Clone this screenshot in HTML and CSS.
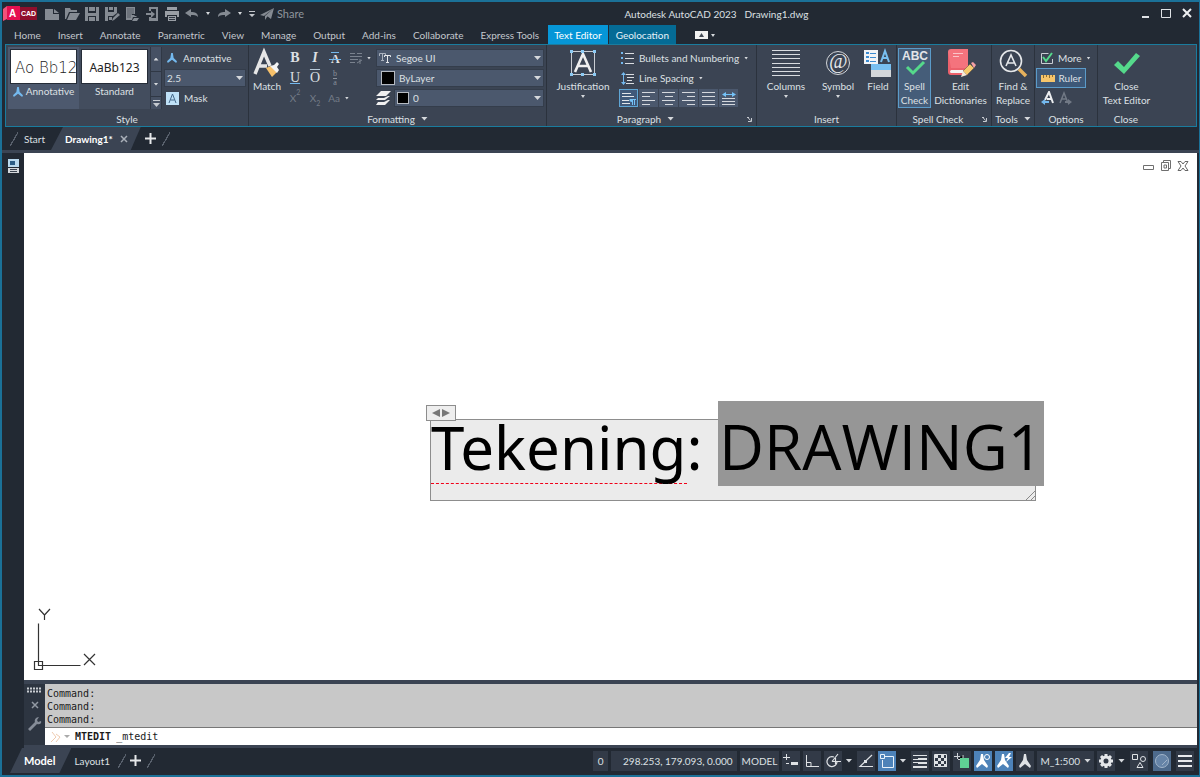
FILE: index.html
```html
<!DOCTYPE html>
<html lang="en">
<head>
<meta charset="utf-8">
<title>Autodesk AutoCAD 2023 - Drawing1.dwg</title>
<link rel="stylesheet" href="styles.css">
</head>
<body>
<header class="titlebar">
  <div class="quick">
    <button class="logo" aria-label="Application menu"><svg width="34" height="15" viewBox="0 0 34 15"><path fill="#8f0f2c" d="M4 1h30v13H4z"/><path fill="#f0527a" d="M0 3l4-3v13l-4 2z"/><path fill="#e51050" d="M4 0h13v14H4z"/><text class="logo-a" x="6" y="11">A</text><text class="logo-cad" x="18" y="10">CAD</text></svg></button>
    <button aria-label="New"><svg width="16" height="14" viewBox="0 0 16 14"><path fill="#858b93" d="M1 2h8v5h6v6H1zM10 2l5 4h-5z"/></svg></button>
    <button aria-label="Open"><svg width="16" height="14" viewBox="0 0 16 14"><path fill="#858b93" d="M1 1h5l1 2h6v2H5l-3 7H1zM6 6h10l-4 7H3z"/></svg></button>
    <button aria-label="Save"><svg width="16" height="14" viewBox="0 0 16 14"><path fill="#858b93" d="M1 0h3v6h8V0h3v14h-3V9H4v5H1zM5 0h6v4H5zM5 10h6v4H5z"/></svg></button>
    <button aria-label="Save As"><svg width="16" height="14" viewBox="0 0 16 14"><path fill="#858b93" d="M1 0h3v5h6V0h3v6l-4 3H4v5H1zM5 0h4v3H5zM5 10h3v3H5zM14 6l2 2-6 5-2 1 1-3z"/></svg></button>
    <button aria-label="Open from mobile"><svg width="16" height="14" viewBox="0 0 16 14"><path fill="#6d737c" d="M2 0h9v7H8v5H2z"/><path fill="#858b93" d="M2 0h9v7h-1V1H3v10h4v2H2zM7 8h3l1 1h2l-1 1H9l-1 3H7zM10 11h5l-2 3H8z"/></svg></button>
    <button aria-label="Save to mobile"><svg width="16" height="14" viewBox="0 0 16 14"><path fill="#858b93" d="M5 0h9v14H5v-4h2v1h5V2H7v2H5zM2 6h5V4l4 3-4 4V8H2z"/></svg></button>
    <button aria-label="Plot"><svg width="16" height="14" viewBox="0 0 16 14"><path fill="#9a9fa6" d="M3 0h10v3H3zM1 4h14v6h-2V8H3v2H1zM4 9h8v5H4z"/><path stroke="#303743" d="M5 10.500h6M5 12.500h6"/></svg></button>
    <button aria-label="Undo"><svg width="16" height="14" viewBox="0 0 16 14"><path fill="#858b93" d="M1 6l6-4v3c4 0 7 1 7 5-2-2-4-2-7-2v2z"/></svg></button>
    <i class="caret tiny"></i>
    <button aria-label="Redo"><svg width="16" height="14" viewBox="0 0 16 14"><path fill="#858b93" d="M15 6L9 2v3c-4 0-7 1-7 5 2-2 4-2 7-2v2z"/></svg></button>
    <i class="caret tiny"></i>
    <button aria-label="Customize"><svg width="8" height="14" viewBox="0 0 8 14"><path fill="#c2c6cb" d="M1 4h6v1H1zM1 7h6L4 10z"/></svg></button>
    <button class="share"><svg width="14" height="14" viewBox="0 0 14 14"><path fill="#858b93" d="M14 1L0 8l4 1zM14 1L5 9v4l2-3zM14 1L7 9l4 3z"/></svg>Share</button>
  </div>
  <div class="caption"><span>Autodesk AutoCAD 2023</span><span>Drawing1.dwg</span></div>
  <div class="winbtns">
    <button aria-label="Minimize"><svg width="12" height="12"><path fill="#dfe2e6" d="M3 8h7v2H3z"/></svg></button>
    <button aria-label="Maximize"><svg width="12" height="12"><path fill="none" stroke="#dfe2e6" d="M1.500 1.500h9v8h-9z"/><path fill="#dfe2e6" d="M1 1h10v1H1z"/></svg></button>
    <button aria-label="Close"><svg width="12" height="12"><path stroke="#eef0f2" stroke-width="2" d="M2 1l8 8M10 1l-8 8"/></svg></button>
  </div>
</header>

<nav class="tabs">
  <button>Home</button><button>Insert</button><button>Annotate</button><button>Parametric</button><button>View</button><button>Manage</button><button>Output</button><button>Add-ins</button><button>Collaborate</button><button>Express Tools</button>
  <button class="tab-on">Text Editor</button><button class="tab-geo">Geolocation</button>
  <button class="tab-min" aria-label="Minimize ribbon"><svg width="20" height="8" viewBox="0 0 20 8"><path fill="#f2f2f2" d="M0 0h13v8H0z"/><path fill="#444b56" d="M4 6l2.500-4L9 6z"/><path fill="#d5d8dc" d="M16 3h4l-2 3z"/></svg></button>
</nav>

<main class="ribbon">
  <section class="panel p-style">
    <div class="tools">
      <div class="gallery">
        <button class="sample sample-on"><span class="thumb thumb-thin">Ao Bb12</span><span class="cap"><svg width="10" height="10" viewBox="0 0 12 12"><path fill="#74b9ee" d="M5 0h2l1 6 4 4-1 2-5-4-5 4-1-2 4-4z"/></svg>Annotative</span></button>
        <button class="sample"><span class="thumb">AaBb123</span><span class="cap">Standard</span></button>
        <div class="scroller"><button aria-label="Up"><i class="caret up"></i></button><button aria-label="Down"><i class="caret"></i></button><button aria-label="Expand"><svg width="7" height="7"><path fill="#c6cad0" d="M0 0h7v1H0zM0 3h7L3.500 7z"/></svg></button></div>
      </div>
      <div class="rows style-rows">
        <button class="row"><svg width="12" height="10" viewBox="0 0 12 12"><path fill="#74b9ee" d="M5 0h2l1 6 4 4-1 2-5-4-5 4-1-2 4-4z"/></svg>Annotative</button>
        <label class="combo"><select aria-label="Text height"><option>2.5</option></select><i class="caret"></i></label>
        <button class="row"><svg width="13" height="13"><path fill="#bfe1f7" d="M0 0h13v13H0z"/><path fill="none" stroke="#44688a" d="M3 11l3.500-9L10 11M4.500 8h4"/></svg>Mask</button>
      </div>
    </div>
    <h2>Style</h2>
  </section>

  <section class="panel p-format">
    <div class="tools">
      <button class="big match"><svg width="28" height="28" viewBox="0 0 28 28"><path fill="none" stroke="#e6e6e6" stroke-width="3.400" d="M2 25L11 3l6 14M5 17h9"/><path fill="#f6c06a" d="M13 19l5-2 6 6-5 5z"/><path fill="#f3f3f3" d="M17 17l4-1 3-3 2 2-2 3 2 3-2 3z"/></svg>Match</button>
      <div class="glyphs">
        <button class="serif"><b>B</b></button><button class="serif"><b><em>I</em></b></button><button class="serif" aria-label="Strikethrough"><svg width="16" height="18"><text class="strike-a" x="4" y="14">A</text><path stroke="#74b9ee" d="M4 3.500h8M2 10.500h12"/></svg></button><button class="with-caret" aria-label="Stack options"><svg width="14" height="14"><path stroke="#7a828e" d="M1 2.500h5M8 2.500h5M1 5.500h12M1 8.500h8M1 11.500h5M11 8v5M8 12l5-3"/></svg><i class="caret tiny"></i></button>
        <button class="serif under">U</button><button class="serif over">O</button><button class="frac" aria-label="Stack"><span>b</span><span>a</span></button><span></span>
        <button class="dim">X<sup>2</sup></button><button class="dim">X<sub>2</sub></button><button class="dim case">Aa<i class="caret tiny"></i></button>
      </div>
      <div class="rows combos">
        <label class="combo"><svg width="13" height="12"><path fill="none" stroke="#aab2be" d="M.5 4V1.500h6V4M3.500 2v6M2 8.500h3"/><path fill="none" stroke="#e6e8eb" d="M5.500 5V3.500h6V5M8.500 4v6M7 10.500h3"/></svg><select aria-label="Font"><option>Segoe UI</option></select><i class="caret"></i></label>
        <label class="combo combo-wide"><i class="swatch"></i><select aria-label="Color"><option>ByLayer</option></select><i class="caret"></i></label>
        <div class="layer"><svg width="15" height="14"><path fill="#f0f0f0" d="M5 0h10l-5 5H0zM12 5h2l-5 4H0l2-2h6zM12 9h2l-5 5H0l2-3h6z"/></svg><label class="combo"><i class="swatch swatch-small"></i><select aria-label="Layer"><option>0</option></select><i class="caret"></i></label></div>
      </div>
    </div>
    <h2>Formatting <i class="caret"></i></h2>
  </section>

  <section class="panel p-para">
    <div class="tools">
      <button class="big just"><svg width="28" height="28" viewBox="0 0 28 28"><path fill="none" stroke="#c9cdd3" d="M2.500 2.500h23v23h-23z"/><path fill="none" stroke="#efefef" stroke-width="2.600" d="M6 23L14 5l8 18M9 17h10"/><path fill="#8ccbf5" d="M1 1h3v3H1zM12 1h3v3h-3zM24 1h3v3h-3zM1 24h3v3H1zM12 24h3v3h-3zM24 24h3v3h-3z"/></svg>Justification<i class="caret tiny"></i></button>
      <div class="rows">
        <button class="row"><svg width="13" height="12"><path fill="#74b9ee" d="M0 0h2v2H0zM0 5h2v2H0zM0 10h2v2H0z"/><path stroke="#dadde1" d="M4 1.500h9M4 6.500h9M4 11.500h9"/></svg>Bullets and Numbering<i class="caret tiny"></i></button>
        <button class="row"><svg width="13" height="13"><path fill="#74b9ee" d="M2 2h1v9H2zM2.500 0L5 3H0zM0 10h5l-2.500 3z"/><path stroke="#dadde1" d="M5 2.500h8M6 5.500h7M6 8.500h5M5 11.500h8"/></svg>Line Spacing<i class="caret tiny"></i></button>
        <div class="aligns">
          <button class="align-on" aria-label="Default"><svg width="14" height="13"><path stroke="#e1e4e8" d="M0 1.500h9M0 4.500h12M0 8.500h7M0 11.500h8"/><path fill="#74c2f7" d="M8 7h6v1h-1v5h-1V8h-1v5h-1v-3c-3 0-3-3-2-3z"/></svg></button>
          <button aria-label="Left"><svg width="14" height="13"><path stroke="#d5d8dd" d="M0 .5h13M0 4.500h8M0 8.500h13M0 12.500h8"/></svg></button>
          <button aria-label="Center"><svg width="14" height="13"><path stroke="#d5d8dd" d="M0 .5h13M3 4.500h8M0 8.500h13M3 12.500h8"/></svg></button>
          <button aria-label="Right"><svg width="14" height="13"><path stroke="#d5d8dd" d="M0 .5h13M5 4.500h8M0 8.500h13M5 12.500h8"/></svg></button>
          <button aria-label="Justify"><svg width="14" height="13"><path stroke="#d5d8dd" d="M0 .5h13M0 4.500h13M0 8.500h13M0 12.500h13"/></svg></button>
          <button aria-label="Distribute"><svg width="14" height="13"><path fill="#74c2f7" d="M0 2.500L4 0v2h6V0l4 2.500L10 5V3H4v2z"/><path stroke="#d5d8dd" d="M0 6.500h13M0 9.500h13M0 12.500h13"/></svg></button>
        </div>
      </div>
    </div>
    <h2>Paragraph <i class="caret"></i></h2><svg class="launch" width="5" height="5"><path fill="none" stroke="#c6cad0" d="M0 .5h2M.5 0l3 3.500M4.500 1v3.500H1"/></svg>
  </section>

  <section class="panel p-insert">
    <div class="tools">
      <button class="big b52"><svg width="28" height="28" viewBox="0 0 28 28"><path stroke="#d9dce0" d="M0 1.500h28M0 5.500h28M0 9.500h28M0 14.500h28M0 18.500h28M0 22.500h28M0 26.500h28"/></svg>Columns<i class="caret tiny"></i></button>
      <button class="big b52"><svg width="26" height="28" viewBox="0 0 26 28"><circle cx="13" cy="14" r="11.500" fill="none" stroke="#d3d6da"/><text class="at" x="4" y="19">@</text></svg>Symbol<i class="caret tiny"></i></button>
      <button class="big"><svg width="28" height="28" viewBox="0 0 28 28"><path fill="#f1f3f5" d="M0 1h14v14H0z"/><path fill="#3b8bd0" d="M2 3h3v2H2zM2 7h3v2H2zM2 11h3v2H2zM6 4h6v1H6zM6 8h6v1H6zM6 12h6v1H6z"/><path fill="#d3d6d9" d="M7 21h20v7H7z"/><path fill="#78bff0" d="M7 15h20v6H7z"/><path fill="none" stroke="#78bff0" stroke-width="2" d="M17 13l4-11 4 11M18 9h6"/></svg>Field</button>
    </div>
    <h2>Insert</h2>
  </section>

  <section class="panel p-spell">
    <div class="tools">
      <button class="big big-on"><svg width="28" height="28" viewBox="0 0 28 28"><text class="abc" x="1" y="11">ABC</text><path fill="none" stroke="#55d98b" stroke-width="3" d="M6 18l6 6L23 13"/></svg>Spell<br>Check</button>
      <button class="big dict"><svg width="28" height="28" viewBox="0 0 28 28"><path fill="#f4737d" d="M1 3q0-3 3-3h17v20H1z"/><path fill="#f4f4f4" d="M3 21h18v3H3z"/><path fill="#ec616c" d="M1 3v20q0 3 3 3h17v-2H4q-2-1 0-3h17v-2H4z"/><path stroke="#fac4c8" d="M6 4.500h10M6 7.500h6"/><path fill="#f5ca6d" stroke="#5a4a3a" stroke-width=".5" d="M23 15l4 4-7 7-4-4z"/><path fill="#f6a0a5" d="M24 14l2-1 3 3-2 3z"/><path fill="#f6ead7" d="M16 22l4 4-6 2z"/></svg>Edit<br>Dictionaries</button>
    </div>
    <h2>Spell Check</h2><svg class="launch" width="5" height="5"><path fill="none" stroke="#c6cad0" d="M0 .5h2M.5 0l3 3.500M4.500 1v3.500H1"/></svg>
  </section>

  <section class="panel p-tools">
    <div class="tools">
      <button class="big"><svg width="28" height="28" viewBox="0 0 28 28"><path stroke="#e7b25d" stroke-width="3.500" d="M20 20l7 7"/><circle cx="12" cy="12" r="10.500" fill="none" stroke="#e6e8ea" stroke-width="1.600"/><path fill="none" stroke="#e6e8ea" stroke-width="1.600" d="M7 17l5-11 5 11M9 14h7"/></svg>Find &amp;<br>Replace</button>
    </div>
    <h2>Tools <i class="caret"></i></h2>
  </section>

  <section class="panel p-opts">
    <div class="tools">
      <div class="rows">
        <button class="row"><svg width="13" height="12"><path fill="none" stroke="#c9cdd3" d="M12.500 7v4.500h-11V1.500h7"/><path fill="none" stroke="#55d98b" stroke-width="2" d="M3 5l3 4 6-8"/></svg>More<i class="caret tiny"></i></button>
        <button class="row ruler-on"><svg width="14" height="7"><path fill="#f5c56b" d="M0 0h14v7H0z"/><path stroke="#8b6b33" d="M2.500 0v3M5.500 0v2M8.500 0v3M11.500 0v2"/></svg>Ruler</button>
        <div class="undo-row"><button aria-label="Undo"><svg width="14" height="14"><path fill="none" stroke="#eceef0" stroke-width="2" d="M4 9l4-8 4 11M6 8h5"/><path fill="#74b9ee" d="M0 11l4-3v2h4v2H4v2z"/></svg></button><button aria-label="Redo"><svg width="14" height="14"><path fill="none" stroke="#717985" stroke-width="1.500" d="M1 12L5 2l4 10M3 8h5"/><path fill="#717985" d="M13 11l-4-3v2H6v2h3v2z"/></svg></button></div>
      </div>
    </div>
    <h2>Options</h2>
  </section>

  <section class="panel p-close">
    <div class="tools">
      <button class="big"><svg width="28" height="28" viewBox="0 0 28 28"><path fill="#55d98b" d="M1 16l4-4 6 6L23 4l4 3-16 18z"/></svg>Close<br>Text Editor</button>
    </div>
    <h2>Close</h2>
  </section>
</main>

<nav class="files"><i class="slash"></i><button>Start</button><button class="file-on"><span>Drawing1*</span><svg width="8" height="8"><path stroke="#aab0b9" stroke-width="1.500" d="M1 1l6 6M7 1L1 7"/></svg></button><button class="add" aria-label="New tab"><svg width="11" height="11"><path stroke="#e6e8ea" stroke-width="2" d="M5.500 0v11M0 5.500h11"/></svg></button><i class="slash"></i></nav>

<div class="work">
  <aside class="dock"><svg width="11" height="14"><path fill="#b9d9ee" d="M0 0h11v8H0z"/><path fill="#2c5d86" d="M2 2h5v4H2z"/><path fill="#d5d8dc" d="M0 9h11v5H0z"/><path stroke="#39424f" d="M2 10.500h7M2 12.500h7"/></svg></aside>
  <div class="col">
    <div class="canvas">
      <div class="docbtns">
        <button aria-label="Minimize drawing"><svg width="12" height="12"><path fill="none" stroke="#6f6f6f" d="M.5 5.500h10v4H.5z"/></svg></button>
        <button aria-label="Restore drawing"><svg width="12" height="12"><path fill="none" stroke="#6f6f6f" d="M3.500 3V.5h7v8H9M1.500 2.500h7v8h-7zM4 5h2.500v3H4z"/></svg></button>
        <button aria-label="Close drawing"><svg width="12" height="12"><path fill="none" stroke="#666" d="M1 1.500h3L6 4l2-2.500h3L8 6l3 4.500H8L6 8l-2 2.500H1L4 6z"/></svg></button>
      </div>
      <div class="mtext">
        <div class="handle"><svg width="18" height="8"><path fill="#777" d="M0 4l8-4v8zM18 4l-8-4v8z"/></svg></div>
        <span class="typed">Tekening:</span><span class="picked">DRAWING1</span>
        <svg class="grip" width="10" height="10"><path stroke="#888" d="M1 10l9-9M6 10l4-4"/></svg>
      </div>
      <svg class="ucs" width="64" height="64" viewBox="0 0 64 64"><path fill="none" stroke="#333" stroke-width="1.200" d="M5.500 15.500v42h42M1.500 53.500h8v8h-8zM6 1l5.500 6L17 1M11.500 7v5M51 46l11 11M62 46L51 57"/></svg>
    </div>
    <div class="cmd">
      <div class="cmdtools">
        <svg width="15" height="6"><path stroke="#c8ccd1" stroke-width="2" stroke-dasharray="2 1" d="M0 1.500h15M0 4.500h15"/></svg>
        <button aria-label="Close command line"><svg width="8" height="8"><path stroke="#9299a3" stroke-width="1.500" d="M1 1l6 6M7 1L1 7"/></svg></button>
        <button aria-label="Customize"><svg width="14" height="14"><path fill="#858c97" d="M13 4l-3 1-1-2 2-3C8 0 6 3 7 5L0 12l2 2 7-7c3 1 5-1 4-3z"/></svg></button>
      </div>
      <div class="console">
        <div class="history"><p>Command:</p><p>Command:</p><p>Command:</p></div>
        <div class="prompt"><svg width="20" height="12"><path fill="none" stroke="#efcbb0" d="M2 1l4 5-5 5M6 3l4 3-4 5"/><path fill="#aaa" d="M14 4h6l-3 3z"/></svg><b>MTEDIT</b><input aria-label="Command input" value="_mtedit"></div>
      </div>
    </div>
  </div>
</div>

<footer class="status">
  <nav class="layouts"><button class="layout-on"><span>Model</span></button><button class="sheet">Layout1</button><i class="slash"></i><button class="add" aria-label="New layout"><svg width="11" height="11"><path stroke="#e6e8ea" stroke-width="2" d="M5.500 0v11M0 5.500h11"/></svg></button><i class="slash"></i></nav>
  <div class="tray">
    <span class="cell">0</span><span class="cell coords">298.253, 179.093, 0.000</span><button class="cell model">MODEL</button>
    <button class="cell" aria-label="Snap"><svg width="16" height="16"><path stroke="#dfe2e5" d="M3.500 1v6M0 4.500h7"/><path fill="#dfe2e5" d="M8 9h7v3H8zM3 10h3v1H3z"/></svg></button>
    <button class="cell" aria-label="Ortho"><svg width="16" height="16"><path fill="none" stroke="#dfe2e5" d="M2.500 2v11.500H15M3 9.500h4V13"/></svg></button>
    <button class="cell" aria-label="Polar"><svg width="16" height="16"><path fill="none" stroke="#dfe2e5" stroke-width="1.200" d="M12 8.500A5 5 0 1 1 9 4M7 8.500h9M7 8.500L13 1M10.500 5v6"/></svg></button><i class="caret"></i>
    <button class="cell" aria-label="Object tracking"><svg width="16" height="16"><path fill="none" stroke="#dfe2e5" stroke-width="1.200" d="M14 2L2 13.500h13"/><path fill="#dfe2e5" d="M6 7h3v3H6z"/></svg></button>
    <button class="cell cell-on" aria-label="Object snap"><svg width="16" height="16"><path fill="none" stroke="#e9f2fa" d="M6 3.500h8.500v11h-11V7M1.500 1.500h4v4h-4z"/></svg></button><i class="caret"></i>
    <button class="cell" aria-label="Lineweight"><svg width="16" height="16"><path fill="#dfe2e5" d="M1 2h14v1H1zM1 6h6v1H1zM6 5h9v2H6zM1 9h5v1H1zM6 9h9v2H6zM1 13h14v2H1z"/></svg></button>
    <button class="cell" aria-label="Transparency"><svg width="16" height="16"><path fill="none" stroke="#dfe2e5" d="M1.500 1.500h12v12h-12z"/><path fill="#dfe2e5" d="M2 2h3v3H2zM8 2h3v3H8zM5 5h3v3H5zM11 5h3v3h-3zM2 8h3v3H2zM8 8h3v3H8zM5 11h3v3H5zM11 11h3v3h-3z"/></svg></button>
    <button class="cell" aria-label="Selection cycling"><svg width="16" height="16"><path stroke="#cfd3d8" d="M3.500 0v6M0 3.500h6M4 6.500h5V2"/><path fill="#5fd095" d="M6 5h9v10H6z"/></svg></button>
    <button class="cell cell-on" aria-label="Annotation visibility"><svg width="16" height="16"><path fill="#fff" d="M6 1h2l1 6 4 6-1 2-5-4-5 4-1-2 4-6z"/><circle cx="12" cy="4" r="2.500" fill="none" stroke="#fff"/></svg></button>
    <button class="cell cell-on" aria-label="Auto scale"><svg width="16" height="16"><path fill="#fff" d="M6 1h2l1 6 4 6-1 2-5-4-5 4-1-2 4-6zM13 0L9 5h3l-2 4 6-5h-3l2-4z"/></svg></button>
    <button class="cell" aria-label="Annotation scale"><svg width="16" height="16"><path fill="#dfe2e5" d="M7 1h2l1 6 4 6-1 2-5-4-5 4-1-2 4-6z"/></svg></button>
    <button class="cell scale">M_1:500<i class="caret"></i></button>
    <button class="cell" aria-label="Workspace"><svg width="16" height="16"><circle cx="8" cy="8" r="4" fill="none" stroke="#e5e7ea" stroke-width="3"/><path stroke="#e5e7ea" stroke-width="3" stroke-dasharray="3 8" d="M8 1v14M1 8h14M3 3l10 10M13 3L3 13"/></svg></button><i class="caret"></i>
    <button class="cell isolate" aria-label="Isolate"><svg width="16" height="16"><path fill="none" stroke="#dfe2e5" d="M1.500 1.500h5v5h-5zM6 14.500h6L9 9.500z"/><circle cx="12" cy="6" r="2.500" fill="none" stroke="#dfe2e5"/></svg></button>
    <button class="cell cell-dim" aria-label="Graphics performance"><svg width="16" height="16"><circle cx="8" cy="8" r="6.500" fill="#6684a7" stroke="#a1b4c9"/><path stroke="#a1b4c9" d="M8 12l5-5"/></svg></button>
    <button class="cell" aria-label="Customization"><svg width="16" height="16"><path fill="#e8eaed" d="M1 2h14v2H1zM1 7h14v2H1zM1 12h14v2H1z"/></svg></button>
  </div>
</footer>
</body>
</html>
```
FILE: styles.css
```css
* { box-sizing: border-box; }
body {
  margin: 0;
  min-height: 100vh;
  display: flex;
  flex-direction: column;
  border: 2px solid #1b7198;
  border-right-width: 1px;
  background: #222933;
  color: #dde0e4;
  font: 10px/14px Lato, "Open Sans", sans-serif;
}
button, select, input { font: inherit; color: inherit; background: none; border: 0; padding: 0; margin: 0; }
button { display: flex; align-items: center; justify-content: center; white-space: nowrap; }
svg { display: block; flex: none; }
h2 { margin: 0; font: inherit; display: flex; justify-content: center; align-items: center; gap: 6px; height: 15px; }
p { margin: 0; }

.caret { display: block; flex: none; width: 7px; height: 4px; background: #d5d8dc; clip-path: polygon(0 0, 100% 0, 50% 100%); }
.caret.tiny { width: 4px; height: 3px; }
.caret.up { clip-path: polygon(50% 0, 100% 100%, 0 100%); }

.titlebar { display: flex; align-items: center; height: 23px; }
.quick { flex: 0 0 52%; display: flex; align-items: center; gap: 4px; padding-left: 1px; color: #8f959d; }
.quick .caret { margin: 0 2px; }
.logo { margin-right: 3px; }
.logo-a { font: bold 10px "Liberation Sans", sans-serif; fill: #fff; }
.logo-cad { font: bold 7px "Liberation Sans", sans-serif; fill: #fff; }
.share { gap: 3px; font-size: 11px; }
.caption { display: flex; gap: 8px; }
.winbtns { margin-left: auto; display: flex; gap: 9px; padding-right: 6px; }

.tabs { display: flex; height: 19px; padding-left: 4px; gap: 1px; }
.tabs button { padding: 0 8px; color: #c3c7cd; }
.tabs .tab-on { background: #0696d7; color: #fff; padding: 0 6px; }
.tabs .tab-geo { background: #056b95; color: #e6f2f8; padding: 0 7px; }
.tabs .tab-min { padding-left: 18px; }

.ribbon { display: flex; margin: 0 2px 0 3px; border: 1px solid #1a7c9e; background: #3b4453; overflow: hidden; }
.panel { position: relative; flex: none; border-right: 1px solid #2b323d; height: 81px; display: flex; flex-direction: column; justify-content: space-between; }
.tools { display: flex; padding: 4px 2px 0; }
.p-style { width: 243px; }
.p-format { width: 298px; }
.p-para { width: 210px; }
.p-insert { width: 140px; }
.p-insert .tools, .p-close .tools { padding-left: 3px; }
.p-spell { width: 95px; }
.p-tools { width: 43px; }
.p-opts { width: 63px; }
.p-close { width: 56px; border-right: 0; }
.launch { position: absolute; right: 4px; bottom: 4px; }
.p-para h2 { padding-right: 12px; }
.p-spell h2 { padding-right: 12px; }

.rows { display: flex; flex-direction: column; gap: 2px; }
.row { height: 18px; gap: 5px; justify-content: flex-start; }
.combo { display: flex; align-items: center; gap: 4px; height: 18px; padding: 0 2px; background: #4b586d; border: 1px solid #343d4b; }
.combo select { flex: 1; min-width: 0; appearance: none; }
.combo-wide { padding-left: 4px; }
.swatch { width: 14px; height: 14px; background: #000; border: 1px solid #b5bac2; }
.swatch-small { width: 12px; height: 12px; }

.gallery { display: flex; background: #434d5e; height: 62px; margin-top: -2px; }
.sample { flex-direction: column; justify-content: flex-start; width: 71px; padding-top: 2px; gap: 1px; }
.sample-on { background: #4d596e; }
.thumb { width: 67px; height: 35px; background: #fff; border: 1px solid #252c37; color: #222; font: 12px/35px "Noto Sans", sans-serif; overflow: hidden; }
.thumb-thin { font: 200 15px/36px "DejaVu Sans", "DejaVu Sans Light", sans-serif; text-align: left; padding-left: 4px; }
.cap { display: flex; align-items: center; gap: 3px; line-height: 13px; }
.scroller { display: flex; flex-direction: column; gap: 1px; width: 12px; background: #303845; padding: 0 1px; }
.scroller button { flex: 2; background: #465164; }
.scroller button:last-child { flex: 1; }
.scroller .caret { width: 5px; height: 3px; }
.style-rows { flex: 1; padding-left: 2px; }
.style-rows .row { padding-left: 2px; }

.big { flex-direction: column; justify-content: flex-start; line-height: 14px; }
.big > svg { margin-bottom: 2px; overflow: visible; }
.big > .caret { margin-top: 2px; }
.match { width: 32px; }
.just { width: 68px; margin-right: 4px; }
.b52 { width: 52px; }
.big-on { background: #455d79; outline: 1px solid #5b9bc9; width: 31px; margin: 0 3px 0 0; }
.dict { width: 55px; }
.p-tools .big { width: 38px; }
.p-close .big { width: 52px; }
.at { font: italic 20px "Liberation Serif", serif; fill: #e8eaec; }
.abc { font: bold 12px "Liberation Sans", sans-serif; fill: #e3e5e8; }

.glyphs { display: grid; grid-template-columns: 20px 20px 20px 30px; grid-auto-rows: 18px; row-gap: 2px; margin: 0 1px 0 2px; }
.serif { font: 14px/14px "Liberation Serif", serif; }
.under { text-decoration: underline #74b9ee; }
.over { text-decoration: overline #b7c9d8; }
.strike-a { font: bold 12px "Liberation Serif", serif; fill: #e3e5e8; }
.frac { flex-direction: column; color: #8a919c; font: 8px/8px "Liberation Serif", serif; }
.frac span + span { border-top: 1px solid #8a919c; }
.dim { color: #747c88; }
.dim sup, .dim sub { font-size: 7px; line-height: 7px; }
.dim sup { align-self: flex-start; }
.dim sub { align-self: flex-end; }
.case { gap: 5px; width: 27px; }
.with-caret { gap: 4px; }
.combos { flex: 1; }
.layer { display: flex; align-items: center; gap: 3px; }
.layer .combo { flex: 1; }

.aligns { display: flex; gap: 1px; margin-left: -2px; }
.aligns button { width: 19px; height: 18px; background: #4b586d; }
.aligns .align-on { background: #40597a; outline: 1px solid #5fa6d5; outline-offset: -1px; }
.ruler-on { background: #3d5878; outline: 1px solid #5b9bc9; width: 48px; justify-content: center; gap: 4px; }
.p-opts .row:first-child { padding-left: 3px; }
.undo-row { display: flex; gap: 4px; height: 18px; padding-left: 4px; }

.files { display: flex; align-items: stretch; height: 26px; padding-left: 8px; border-bottom: 3px solid #3b4453; }
.files button { padding: 0 6px; }
.slash { align-self: center; width: 8px; height: 14px; background: linear-gradient(120deg, transparent 46%, #59616d 47%, #59616d 55%, transparent 56%); }
.files .file-on { background: #3b4453; clip-path: polygon(12px 0, 100% 0, calc(100% - 10px) 100%, 0 100%); padding: 0 13px 0 14px; gap: 7px; font-weight: bold; color: #fff; }
.files .add { padding-left: 4px; }

.work { flex: 1; display: flex; padding-right: 2px; }
.dock { width: 22px; padding: 6px 0 0 6px; }
.col { flex: 1; display: flex; flex-direction: column; }
.canvas { position: relative; flex: 1; background: #fff; }
.docbtns { display: flex; justify-content: flex-end; gap: 5px; padding: 7px 8px 0; }
.mtext { position: absolute; left: 406px; top: 266px; width: 606px; height: 82px; background: #ebebeb; border: 1px solid #8d8d8d; color: #000; }
.handle { position: absolute; left: -5px; top: -15px; width: 30px; height: 16px; background: #eee; border: 1px solid #8d8d8d; display: flex; align-items: center; justify-content: center; }
.typed { display: block; width: 287px; font: 60px/54px "Noto Sans", sans-serif; }
.typed::after { content: ""; display: block; width: 256px; margin-top: 9px; border-top: 1px dashed #f00018; }
.picked { position: absolute; left: 287px; top: -19px; width: 326px; height: 85px; padding-left: 1px; background: #969696; font: 62px/90px "Open Sans", sans-serif; }
.grip { position: absolute; right: 0; bottom: 0; }
.ucs { position: absolute; left: 9px; bottom: 8px; }

.cmd { display: flex; border-top: 4px solid #3b4453; border-bottom: 3px solid #3b4453; }
.cmdtools { width: 21px; background: #2d3541; display: flex; flex-direction: column; align-items: center; gap: 8px; padding-top: 3px; }
.console { flex: 1; font: 10px/13px "DejaVu Sans Mono", monospace; color: #1a1a1a; }
.history { background: #c8c8c8; padding: 3px 2px 1px; border-bottom: 1px solid #777; }
.prompt { display: flex; align-items: center; gap: 5px; height: 17px; background: #fff; padding-left: 5px; }
.prompt input { flex: 1; }

.status { display: flex; align-items: stretch; justify-content: space-between; height: 27px; padding: 0 5px 2px 8px; }
.layouts { display: flex; }
.layouts button { padding: 0 8px; }
.layouts .layout-on { background: #3b4453; clip-path: polygon(12px 0, 100% 0, calc(100% - 12px) 100%, 0 100%); padding: 0 16px 0 14px; font-size: 11px; font-weight: bold; color: #fff; }
.layouts .sheet { padding-left: 3px; }
.layouts .add { padding: 0 6px 0 4px; }
.tray { display: flex; align-items: center; gap: 3px; }
.cell { display: flex; align-items: center; justify-content: center; min-width: 15px; height: 20px; padding: 0 1px; background: #323a47; }
.coords { padding: 0 4px 0 12px; }
.model { padding: 0 2px; }
.tray > .caret { margin-right: 2px; }
.cell-on { background: #4d82b8; }
.cell-dim { background: #4d6a8c; margin: 0 2px; }
.scale { gap: 4px; padding: 0 3px; }
```
